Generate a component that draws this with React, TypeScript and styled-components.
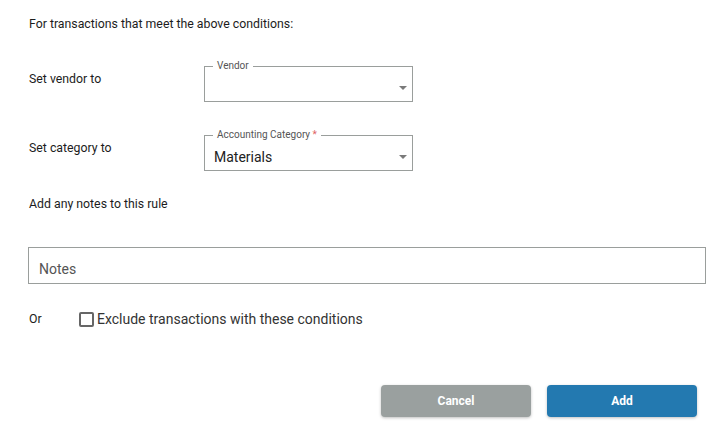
import React from 'react';
import styled, { createGlobalStyle } from 'styled-components';

const GlobalStyle = createGlobalStyle`
  html, body {
    margin: 0;
    padding: 0;
    background: #ffffff;
  }
  body {
    font-family: Roboto, "Liberation Sans", Arial, sans-serif;
  }
`;

const App = () => {
  return (
    <>
      <GlobalStyle />
      <RuleForm>
        <Heading>For transactions that meet the above conditions:</Heading>

        <FieldRow $top={30}>
          <RowLabel>Set vendor to</RowLabel>
          <SelectBox label="Vendor" />
        </FieldRow>

        <FieldRow $top={28}>
          <RowLabel>Set category to</RowLabel>
          <SelectBox label="Accounting Category" required value="Materials" />
        </FieldRow>

        <NotesLabel>Add any notes to this rule</NotesLabel>

        <NotesBox>
          <NotesInput placeholder="Notes" />
        </NotesBox>

        <ExcludeRow>
          <OrText>Or</OrText>
          <CheckLabel>
            <CheckBox type="checkbox" />
            Exclude transactions with these conditions
          </CheckLabel>
        </ExcludeRow>

        <Actions>
          <ActionButton $variant="cancel">Cancel</ActionButton>
          <ActionButton $variant="primary">Add</ActionButton>
        </Actions>
      </RuleForm>
    </>
  );
};

type SelectBoxProps = {
  label: string;
  required?: boolean;
  value?: string;
};

const SelectBox = ({ label, required, value }: SelectBoxProps) => {
  return (
    <SelectFrame>
      <Legend>
        {label}
        {required && <Star> *</Star>}
      </Legend>
      <SelectValue>{value}</SelectValue>
      <Caret viewBox="0 0 8 4" aria-hidden>
        <path d="M0 0 L8 0 L4 4 Z" />
      </Caret>
    </SelectFrame>
  );
};

const RuleForm = styled.div`
  display: flex;
  flex-direction: column;
  width: 719px;
  height: 436px;
  box-sizing: border-box;
  padding: 17px 22px 0 29px;
  color: #1c1c1c;
`;

const Heading = styled.div`
  font-size: 12.3px;
  line-height: 14px;
`;

const FieldRow = styled.div<{ $top: number }>`
  display: flex;
  align-items: flex-start;
  margin-top: ${(p) => p.$top}px;
`;

const RowLabel = styled.div`
  width: 175px;
  margin-top: 11px;
  font-size: 12.3px;
  line-height: 14px;
`;

const SelectFrame = styled.fieldset`
  display: flex;
  align-items: center;
  box-sizing: border-box;
  width: 209px;
  height: 41px;
  margin: 0;
  padding: 0 5px 0 9px;
  border: 1px solid #9a9e9c;
  border-radius: 0;
  min-width: 0;
`;

const Legend = styled.legend`
  margin-left: -1px;
  padding: 0 4px;
  font-size: 10px;
  line-height: 10px;
  color: #555;
`;

const Star = styled.span`
  color: #e06464;
`;

const SelectValue = styled.div`
  flex: 1;
  padding-top: 4px;
  font-size: 14px;
  color: #222;
`;

const Caret = styled.svg`
  width: 8px;
  height: 4px;
  margin-top: 3px;
  fill: #7a7a7a;
`;

const NotesLabel = styled.div`
  margin-top: 26px;
  font-size: 12.3px;
  line-height: 14px;
`;

const NotesBox = styled.div`
  display: flex;
  align-items: center;
  box-sizing: border-box;
  margin-top: 36px;
  margin-left: -1px;
  width: 678px;
  height: 37px;
  border: 1px solid #9a9e9c;
`;

const NotesInput = styled.input`
  flex: 1;
  border: none;
  outline: none;
  background: transparent;
  padding: 6px 10px 0;
  font-family: Roboto, "Liberation Sans", Arial, sans-serif;
  font-size: 14px;
  color: #222;

  &::placeholder {
    color: #555;
    opacity: 1;
  }
`;

const ExcludeRow = styled.div`
  display: flex;
  align-items: center;
  margin-top: 27px;
`;

const OrText = styled.div`
  width: 50px;
  font-size: 12.3px;
`;

const CheckLabel = styled.label`
  display: flex;
  align-items: center;
  font-size: 14px;
  color: #333;
`;

const CheckBox = styled.input`
  appearance: none;
  box-sizing: border-box;
  width: 15px;
  height: 15px;
  margin: 1px 3px 0 0;
  border: 2px solid #666;
  border-radius: 2px;
  background: #fff;
`;

const Actions = styled.div`
  display: flex;
  justify-content: flex-end;
  gap: 16px;
  margin-top: 58px;
`;

const ActionButton = styled.button<{ $variant: 'cancel' | 'primary' }>`
  width: 150px;
  height: 32px;
  border: none;
  border-radius: 4px;
  background: ${(p) => (p.$variant === 'primary' ? '#2379b0' : '#9aa09f')};
  box-shadow: 0 1px 3px rgba(0, 0, 0, 0.25);
  color: #fff;
  font-family: Roboto, "Liberation Sans", Arial, sans-serif;
  font-size: 12px;
  font-weight: 700;
  cursor: pointer;
`;

export default App;
